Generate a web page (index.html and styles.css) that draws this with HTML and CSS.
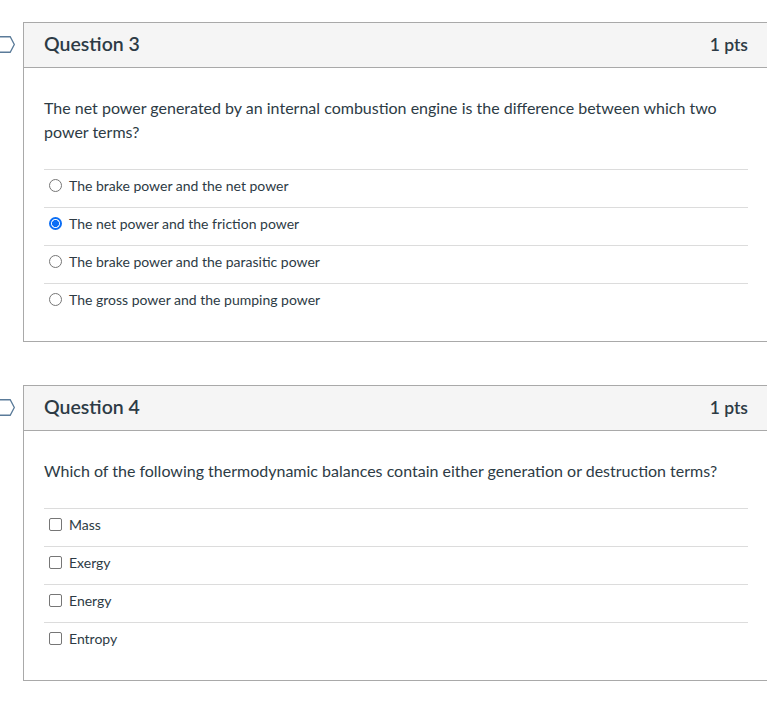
FILE: index.html
```
<!DOCTYPE html>
<html>
<head>
<meta charset="utf-8">
<link rel="stylesheet" href="styles.css">
</head>
<body>
<div class="page">
  <div class="card">
    <svg class="marker" width="16" height="17" viewBox="0 0 16 17"><path d="M-3 0.75 H10.2 L14.3 8.5 L10.2 16.25 H-3" fill="none" stroke="#5a7b99" stroke-width="1.3"/></svg>
    <div class="card-head">
      <span class="title">Question 3</span>
      <span class="pts">1 pts</span>
    </div>
    <div class="card-body">
      <p class="qtext">The net power generated by an internal combustion engine is the difference between which two power terms?</p>
      <div class="answers">
        <div class="answer"><span class="radio"></span><span>The brake power and the net power</span></div>
        <div class="answer"><span class="radio checked"></span><span>The net power and the friction power</span></div>
        <div class="answer"><span class="radio"></span><span>The brake power and the parasitic power</span></div>
        <div class="answer"><span class="radio"></span><span>The gross power and the pumping power</span></div>
      </div>
    </div>
  </div>
  <div class="card">
    <svg class="marker" width="16" height="17" viewBox="0 0 16 17"><path d="M-3 0.75 H10.2 L14.3 8.5 L10.2 16.25 H-3" fill="none" stroke="#5a7b99" stroke-width="1.3"/></svg>
    <div class="card-head">
      <span class="title">Question 4</span>
      <span class="pts">1 pts</span>
    </div>
    <div class="card-body">
      <p class="qtext">Which of the following thermodynamic balances contain either generation or destruction terms?</p>
      <div class="answers">
        <div class="answer"><span class="check"></span><span>Mass</span></div>
        <div class="answer"><span class="check"></span><span>Exergy</span></div>
        <div class="answer"><span class="check"></span><span>Energy</span></div>
        <div class="answer"><span class="check"></span><span>Entropy</span></div>
      </div>
    </div>
  </div>
</div>
</body>
</html>
```
FILE: styles.css
```
html, body {
  margin: 0;
  padding: 0;
  background: #fff;
  overflow: hidden;
}
body {
  font-family: Lato, "Open Sans", sans-serif;
  color: #2d3b45;
}
.page {
  padding-top: 22px;
}
.card {
  position: relative;
  margin-left: 23px;
  width: 745px;
  box-sizing: border-box;
  border: 1px solid #a9a9a9;
  margin-bottom: 43px;
}
.marker {
  position: absolute;
  left: -24px;
  top: 13px;
}
.card-head {
  height: 44px;
  background: #f5f5f5;
  border-bottom: 1px solid #a9a9a9;
  display: flex;
  align-items: center;
  justify-content: space-between;
  padding: 0 19px 0 20px;
}
.title {
  font-size: 19.5px;
  font-weight: 600;
  color: #2d3b45;
  margin-top: -4px;
}
.pts {
  font-size: 17.5px;
  font-weight: 600;
  color: #2d3b45;
  margin-top: -2px;
}
.card-body {
  padding: 28px 19px 20px 20px;
}
.qtext {
  margin: 0 0 25px 0;
  font-size: 16px;
  line-height: 24px;
}
.answer {
  border-top: 1px solid #dcdcdc;
  display: flex;
  align-items: center;
  height: 38px;
  box-sizing: border-box;
  padding-bottom: 6px;
  font-size: 14px;
  gap: 7px;
}
.radio {
  width: 13px;
  height: 13px;
  box-sizing: border-box;
  border: 1px solid #767676;
  border-radius: 50%;
  margin-left: 5px;
  flex: none;
}
.radio.checked {
  border: 2px solid #0b6ef5;
  background: radial-gradient(circle, #0b6ef5 0 3.2px, #fff 3.8px);
}
.check {
  width: 13px;
  height: 13px;
  box-sizing: border-box;
  border: 1px solid #767676;
  border-radius: 2px;
  margin-left: 5px;
  flex: none;
}
```
